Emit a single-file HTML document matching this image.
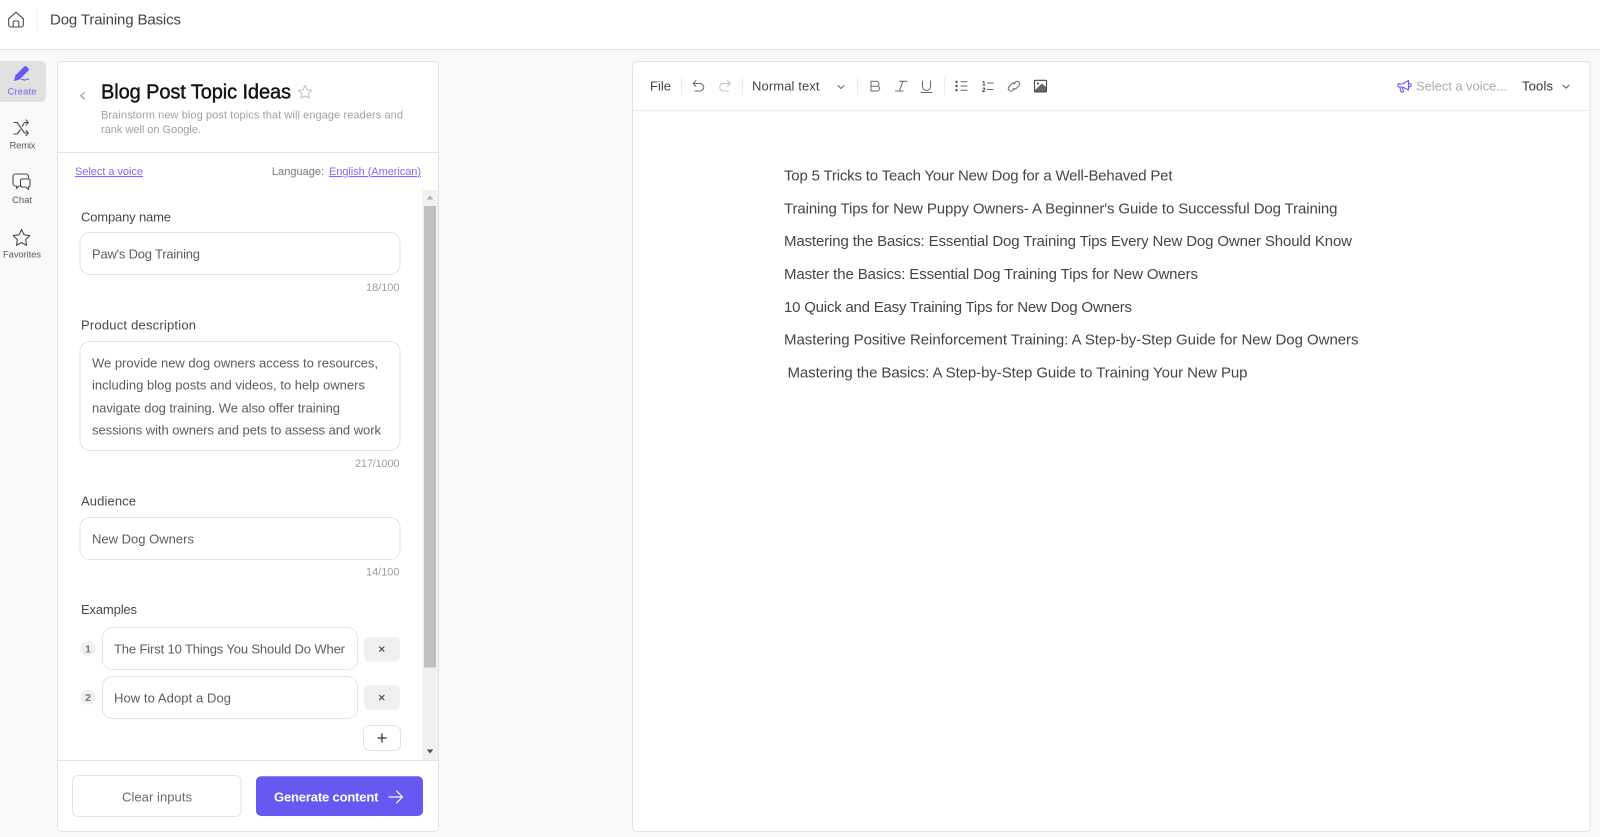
<!DOCTYPE html>
<html lang="en">
<head>
<meta charset="utf-8">
<title>Dog Training Basics</title>
<style>
html,body{margin:0;padding:0;width:1600px;height:837px;overflow:hidden;background:#fff}
svg{display:block;filter:blur(.3px)}
text{font-family:"Liberation Sans",Arial,sans-serif;white-space:pre}
.lab{font-size:13px;fill:#484848}
.inp{font-size:13px;fill:#5c5c5c}
.cnt{font-size:11px;fill:#9e9e9e}
.nav{font-size:9.5px;fill:#5c5c5c}
.ed{font-size:15px;fill:#454545}
.ic{fill:none;stroke:#4a4a4a;stroke-width:1.1;stroke-linecap:round;stroke-linejoin:round}
.tb{fill:none;stroke:#666;stroke-width:1;stroke-linecap:round;stroke-linejoin:round}
.box{fill:#fff;stroke:#e3e3e3;stroke-width:1}
</style>
</head>
<body>
<svg width="1600" height="837" viewBox="0 0 1600 837" xmlns="http://www.w3.org/2000/svg">
<defs><clipPath id="c1"><rect x="114" y="635" width="231" height="26"/></clipPath></defs>
<rect width="1600" height="837" fill="#f9f9f9"/>

<!-- Top bar -->
<rect width="1600" height="49" fill="#fff"/>
<rect y="49" width="1600" height="1" fill="#e6e6e6"/>
<path class="ic" d="M8.700 18.600 16 12.300l7.300 6.300V25a2 2 0 0 1-2 2H10.700a2 2 0 0 1-2-2ZM13.200 27v-5a1 1 0 0 1 1-1h3.600a1 1 0 0 1 1 1v5" stroke-width="1.300"/>
<rect x="36.500" y="8" width="1" height="23" fill="#ececec"/>
<text x="50" y="24.500" font-size="15" fill="#444" textLength="131">Dog Training Basics</text>

<!-- Sidebar -->
<rect x="-6" y="61" width="52" height="41" rx="5" fill="#e0e0e0"/>
<path d="M14 81l1.300-5.500 9-9c.8-.8 1.600-.6 2.200 0l1.900 1.900c.7.700.7 1.500 0 2.200l-9 9Z" fill="#6658f0"/>
<path d="M21 79.700c1.500-1.700 2.600 1.300 4.100.3s2.200-1.400 3.700-.3" stroke="#6658f0" stroke-width="1" fill="none"/>
<text class="nav" x="7.500" y="94.300" style="fill:#7567f0" textLength="29">Create</text>

<path class="ic" d="M14 122.500h3.200l7.300 10.500h3.500M14 134h3.200l3-4.200M22.200 126.200l2.300-3.700h3.500M26 120l2.300 2.500-2.300 2.500M26 130.500l2.300 2.500-2.300 2.500"/>
<text class="nav" x="9.500" y="148.700" textLength="26">Remix</text>

<path class="ic" d="M15.500 174h10.500a2.500 2.500 0 0 1 2.500 2.500v1.500M21 186h-2l-2.500 2.500V186h-1a2.500 2.500 0 0 1-2.500-2.500v-7a2.500 2.500 0 0 1 2.500-2.500"/>
<path class="ic" d="M22 179h6.500a1.500 1.500 0 0 1 1.500 1.500v5a1.500 1.500 0 0 1-1.500 1.500v2.500l-2.500-2.500h-4a1.500 1.500 0 0 1-1.500-1.500v-5a1.500 1.500 0 0 1 1.500-1.500Z"/>
<text class="nav" x="12" y="203" textLength="20">Chat</text>

<path class="ic" d="M21.500 229.500l2.500 5.300 5.800.8-4.200 4 1 5.800-5.100-2.800-5.100 2.800 1-5.800-4.200-4 5.800-.8Z"/>
<text class="nav" x="3" y="257.300" textLength="38">Favorites</text>

<!-- Left panel -->
<rect class="box" x="57.500" y="61.500" width="381" height="770" rx="4"/>
<path d="M84.500 92.500l-3.800 3.300 3.800 3.300" fill="none" stroke="#999" stroke-width="1.100" stroke-linecap="round" stroke-linejoin="round"/>
<text x="101" y="98.500" font-size="20" fill="#111" stroke="#111" stroke-width=".4" textLength="190">Blog Post Topic Ideas</text>
<path d="M305 85.500l2 4.200 4.600.6-3.300 3.200.8 4.600-4.100-2.200-4.100 2.200.8-4.600-3.300-3.200 4.600-.6Z" fill="none" stroke="#c4c4c4" stroke-width="1.100" stroke-linejoin="round"/>
<text x="101" y="118.300" font-size="11" fill="#a0a0a0" textLength="302">Brainstorm new blog post topics that will engage readers and</text>
<text x="101" y="133" font-size="11" fill="#a0a0a0" textLength="100">rank well on Google.</text>
<rect x="58" y="152" width="380" height="1" fill="#e6e6e6"/>

<text x="75" y="175" font-size="11" fill="#7b6cff" text-decoration="underline" textLength="68">Select a voice</text>
<text x="272" y="175" font-size="11" fill="#8a8a8a" stroke="#8a8a8a" stroke-width=".15" textLength="52">Language:</text>
<text x="329" y="175" font-size="11" fill="#7b6cff" text-decoration="underline" textLength="92">English (American)</text>

<!-- Scrollbar -->
<rect x="422.500" y="190" width="15.500" height="570" fill="#f1f1f1"/>
<rect x="424" y="206" width="12" height="461.500" fill="#c1c1c1"/>
<path d="M430 195.500l3.200 4h-6.400Z" fill="#b0b0b0"/>
<path d="M430 753.500l3.200-4h-6.400Z" fill="#505050"/>

<!-- Fields -->
<text class="lab" x="81" y="221.300" textLength="90">Company name</text>
<rect class="box" x="80" y="232.500" width="320" height="42" rx="10"/>
<text class="inp" x="92" y="258.700" textLength="108">Paw's Dog Training</text>
<text class="cnt" x="366" y="291" textLength="33.500">18/100</text>

<text class="lab" x="81" y="329.300" textLength="115">Product description</text>
<rect class="box" x="80" y="341.500" width="320" height="109" rx="10"/>
<text class="inp" x="92" y="367.300" textLength="286">We provide new dog owners access to resources,</text>
<text class="inp" x="92" y="389.700" textLength="273">including blog posts and videos, to help owners</text>
<text class="inp" x="92" y="412.300" textLength="248">navigate dog training. We also offer training</text>
<text class="inp" x="92" y="434.700" textLength="289">sessions with owners and pets to assess and work</text>
<text class="cnt" x="355" y="467" textLength="44.500">217/1000</text>

<text class="lab" x="81" y="505.700" textLength="55">Audience</text>
<rect class="box" x="80" y="517.500" width="320" height="42" rx="10"/>
<text class="inp" x="92" y="543.300" textLength="102">New Dog Owners</text>
<text class="cnt" x="366" y="575.700" textLength="33.500">14/100</text>

<text class="lab" x="81" y="614" textLength="56">Examples</text>
<circle cx="88" cy="648.500" r="7.500" fill="#f0f0f0"/>
<text x="88" y="652.300" font-size="10.500" font-weight="700" fill="#777" text-anchor="middle">1</text>
<rect class="box" x="102.500" y="627.500" width="255" height="42" rx="10"/>
<g clip-path="url(#c1)"><text class="inp" x="114" y="653.300" textLength="231">The First 10 Things You Should Do Wher</text></g>
<rect x="364" y="637" width="36" height="24.500" rx="4" fill="#f0f0f0"/>
<path class="ic" d="M379.500 646.800l4.500 4.500M384 646.800l-4.500 4.500"/>

<circle cx="88" cy="697.300" r="7.500" fill="#f0f0f0"/>
<text x="88" y="701.100" font-size="10.500" font-weight="700" fill="#777" text-anchor="middle">2</text>
<rect class="box" x="102.500" y="676.500" width="255" height="42" rx="10"/>
<text class="inp" x="114" y="702.300" textLength="117">How to Adopt a Dog</text>
<rect x="364" y="685.300" width="36" height="24.500" rx="4" fill="#f0f0f0"/>
<path class="ic" d="M379.500 695.300l4.500 4.500M384 695.300l-4.500 4.500"/>

<rect class="box" x="363.500" y="725.500" width="37" height="25" rx="6"/>
<path d="M382 733.500v9M377.500 738h9" stroke="#333" stroke-width="1.300" fill="none"/>

<!-- Footer -->
<rect x="58" y="760" width="380" height="1" fill="#e6e6e6"/>
<rect class="box" x="72.500" y="775.500" width="168.500" height="41" rx="6"/>
<text x="122" y="801.300" font-size="13" fill="#6a6a6a" textLength="70">Clear inputs</text>
<rect x="256" y="776.300" width="167" height="39.700" rx="5" fill="#6658f0"/>
<text x="274" y="801.300" font-size="13" font-weight="700" fill="#fff" textLength="104.500">Generate content</text>
<path d="M389 797h13M396.500 791l6 6-6 6" fill="none" stroke="#fff" stroke-width="1.200" stroke-linecap="round" stroke-linejoin="round"/>

<!-- Editor -->
<rect class="box" x="632.500" y="61.500" width="957.500" height="770" rx="4"/>
<rect x="633" y="110" width="957" height="1" fill="#ececec"/>

<text x="650" y="90.700" font-size="13" fill="#444" textLength="21">File</text>
<rect x="681" y="77" width="1" height="18" fill="#ececec"/>
<path class="tb" d="M693.500 83.500h6.500a3.700 3.700 0 0 1 0 7.500h-5M696 80.500l-2.800 3 2.800 3"/>
<path class="tb" style="stroke:#c0c0c0" d="M730 83.500h-6.500a3.700 3.700 0 0 0 0 7.500h5M727.500 80.500l2.800 3-2.800 3"/>
<rect x="742" y="77" width="1" height="18" fill="#ececec"/>
<text x="752" y="90.700" font-size="13" fill="#444" textLength="67.500">Normal text</text>
<path class="tb" d="M838 85.500l3 3 3-3"/>
<rect x="857" y="77" width="1" height="18" fill="#ececec"/>
<path class="tb" d="M871 81.200h5.500a2.500 2.500 0 0 1 0 5H871ZM871 86.200h6.300a2.400 2.400 0 0 1 0 4.800H871Z"/>
<path class="tb" d="M899.500 81.200h7.500M895.500 91h7.500M903 81.200l-3.700 9.800"/>
<path class="tb" d="M922.500 81v5.500a4 4 0 0 0 8 0V81M921 92.500h11"/>
<rect x="944" y="77" width="1" height="18" fill="#ececec"/>
<g fill="#4a4a4a"><circle cx="956.500" cy="81.800" r="1.200"/><circle cx="956.500" cy="86" r="1.200"/><circle cx="956.500" cy="90.200" r="1.200"/></g>
<path d="M960.500 81.800h7M960.500 86h7M960.500 90.200h7" stroke="#666" stroke-width="1" fill="none"/>
<text x="982" y="85.500" font-size="6.500" font-weight="700" fill="#333">1</text>
<text x="982" y="92" font-size="6.500" font-weight="700" fill="#333">2</text>
<path d="M987 83h6.500M987 89.500h6.500" stroke="#666" stroke-width="1" fill="none"/>
<path class="tb" d="M1013.500 83.800l1.800-1.800a2.600 2.600 0 0 1 3.700 3.700l-2.600 2.600a2.600 2.600 0 0 1-3.300.3M1014.500 88.500l-1.800 1.800a2.600 2.600 0 0 1-3.700-3.700l2.600-2.600a2.600 2.600 0 0 1 3.300-.3"/>
<rect x="1034.500" y="80.300" width="12" height="11.700" rx="1" fill="none" stroke="#444" stroke-width="1.100"/>
<path d="M1035 91.500v-1.500l7-6.500 4 3.500v4.500Z" fill="#666"/>
<circle cx="1038" cy="83.500" r="1.100" fill="#555"/>

<path d="M1399 84h3.500l6-3.500v9.500l-6-3h-3.500a1 1 0 0 1-1-1v-1.500a1 1 0 0 1 1-1ZM1400 87.500l1 4.500h2.500l-1-4.500M1409 83.500l2 .5v2.500l-2 .5" fill="none" stroke="#6658f0" stroke-width="1.100" stroke-linejoin="round"/>
<text x="1416" y="90.700" font-size="13" fill="#aaa" textLength="91">Select a voice...</text>
<text x="1522" y="90.700" font-size="13" fill="#333" textLength="31">Tools</text>
<path class="tb" d="M1563 85.200l3 3 3-3" style="stroke:#444"/>

<text class="ed" x="784" y="180.500" textLength="388.500">Top 5 Tricks to Teach Your New Dog for a Well-Behaved Pet</text>
<text class="ed" x="784" y="213.300" textLength="553.500">Training Tips for New Puppy Owners- A Beginner's Guide to Successful Dog Training</text>
<text class="ed" x="784" y="246.100" textLength="568">Mastering the Basics: Essential Dog Training Tips Every New Dog Owner Should Know</text>
<text class="ed" x="784" y="279" textLength="414">Master the Basics: Essential Dog Training Tips for New Owners</text>
<text class="ed" x="784" y="311.800" textLength="348">10 Quick and Easy Training Tips for New Dog Owners</text>
<text class="ed" x="784" y="344.600" textLength="574.500">Mastering Positive Reinforcement Training: A Step-by-Step Guide for New Dog Owners</text>
<text class="ed" x="787.500" y="377.500" textLength="460">Mastering the Basics: A Step-by-Step Guide to Training Your New Pup</text>
</svg>
</body>
</html>
